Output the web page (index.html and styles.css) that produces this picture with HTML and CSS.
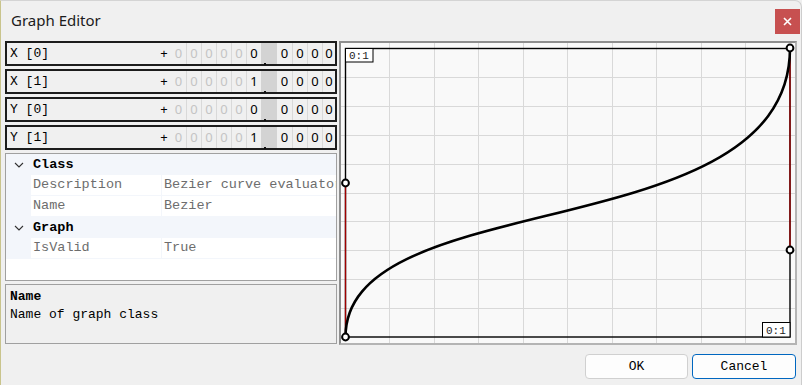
FILE: index.html
```html
<!DOCTYPE html>
<html>
<head>
<meta charset="utf-8">
<link rel="stylesheet" href="styles.css">
</head>
<body>
<div class="window">
  <header class="titlebar">
    <span class="title">Graph Editor</span>
    <button class="close" aria-label="Close">
      <svg width="9" height="9" viewBox="0 0 9 9"><path d="M1 1 L8 8 M8 1 L1 8" stroke="#fff" stroke-width="1.6" fill="none"/></svg>
    </button>
  </header>
  <main class="content">
    <section class="left">
      <div class="vec-row"><span class="vec-label">X [0]</span><div class="digits"><span class="sign">+</span><span class="d dim first">0</span><span class="d dim">0</span><span class="d dim">0</span><span class="d dim">0</span><span class="d dim">0</span><span class="d">0</span><span class="point"></span><span class="d nb">0</span><span class="d">0</span><span class="d">0</span><span class="d last">0</span></div></div>
      <div class="vec-row"><span class="vec-label">X [1]</span><div class="digits"><span class="sign">+</span><span class="d dim first">0</span><span class="d dim">0</span><span class="d dim">0</span><span class="d dim">0</span><span class="d dim">0</span><span class="d">1</span><span class="point"></span><span class="d nb">0</span><span class="d">0</span><span class="d">0</span><span class="d last">0</span></div></div>
      <div class="vec-row"><span class="vec-label">Y [0]</span><div class="digits"><span class="sign">+</span><span class="d dim first">0</span><span class="d dim">0</span><span class="d dim">0</span><span class="d dim">0</span><span class="d dim">0</span><span class="d">0</span><span class="point"></span><span class="d nb">0</span><span class="d">0</span><span class="d">0</span><span class="d last">0</span></div></div>
      <div class="vec-row"><span class="vec-label">Y [1]</span><div class="digits"><span class="sign">+</span><span class="d dim first">0</span><span class="d dim">0</span><span class="d dim">0</span><span class="d dim">0</span><span class="d dim">0</span><span class="d">1</span><span class="point"></span><span class="d nb">0</span><span class="d">0</span><span class="d">0</span><span class="d last">0</span></div></div>

      <div class="props">
        <div class="cat"><span class="chev"><svg width="10" height="6" viewBox="0 0 10 6"><path d="M1 1 L5 5 L9 1" stroke="#333" stroke-width="1.1" fill="none"/></svg></span><span class="cat-name">Class</span></div>
        <div class="prop"><span class="pname">Description</span><span class="pval">Bezier curve evaluator</span></div>
        <div class="prop"><span class="pname">Name</span><span class="pval">Bezier</span></div>
        <div class="cat"><span class="chev"><svg width="10" height="6" viewBox="0 0 10 6"><path d="M1 1 L5 5 L9 1" stroke="#333" stroke-width="1.1" fill="none"/></svg></span><span class="cat-name">Graph</span></div>
        <div class="prop"><span class="pname">IsValid</span><span class="pval">True</span></div>
      </div>

      <div class="desc">
        <div class="desc-title">Name</div>
        <div>Name of graph class</div>
      </div>
    </section>

    <section class="graph">
      <svg class="plot" width="454" height="300" viewBox="341 43 454 300">
        <rect x="341" y="43" width="454" height="300" fill="#f9f9f9"/>
        <g stroke="#d9d9d9" stroke-width="1">
          <line x1="389.5" y1="43" x2="389.5" y2="343"/>
          <line x1="434.5" y1="43" x2="434.5" y2="343"/>
          <line x1="478.5" y1="43" x2="478.5" y2="343"/>
          <line x1="523.5" y1="43" x2="523.5" y2="343"/>
          <line x1="567.5" y1="43" x2="567.5" y2="343"/>
          <line x1="612.5" y1="43" x2="612.5" y2="343"/>
          <line x1="656.5" y1="43" x2="656.5" y2="343"/>
          <line x1="701.5" y1="43" x2="701.5" y2="343"/>
          <line x1="745.5" y1="43" x2="745.5" y2="343"/>
          <line x1="341" y1="77.5" x2="795" y2="77.5"/>
          <line x1="341" y1="106.5" x2="795" y2="106.5"/>
          <line x1="341" y1="135.5" x2="795" y2="135.5"/>
          <line x1="341" y1="164.5" x2="795" y2="164.5"/>
          <line x1="341" y1="193.5" x2="795" y2="193.5"/>
          <line x1="341" y1="221.5" x2="795" y2="221.5"/>
          <line x1="341" y1="250.5" x2="795" y2="250.5"/>
          <line x1="341" y1="279.5" x2="795" y2="279.5"/>
          <line x1="341" y1="308.5" x2="795" y2="308.5"/>
        </g>
        <rect x="345.5" y="48.5" width="444.5" height="288.5" fill="none" stroke="#000" stroke-width="1.4"/>
        <line x1="345.5" y1="337" x2="345.5" y2="183" stroke="#a00000" stroke-width="1.3"/>
        <line x1="790" y1="48" x2="790" y2="250" stroke="#a00000" stroke-width="1.3"/>
        <path d="M345.5 337 C345.5 183 790 250 790 48" fill="none" stroke="#000" stroke-width="2.6"/>
        <g fill="#fff" stroke="#000" stroke-width="2">
          <circle cx="345.5" cy="337" r="3.4"/>
          <circle cx="345.5" cy="183" r="3.4"/>
          <circle cx="790" cy="250" r="3.4"/>
          <circle cx="790" cy="48" r="3.4"/>
        </g>
        <rect x="345.5" y="48.5" width="27.5" height="13.5" fill="#fff" stroke="#000" stroke-width="1"/>
        <text x="349" y="59" class="tag">0:1</text>
        <rect x="762.5" y="322.5" width="27.5" height="14.5" fill="#fff" stroke="#000" stroke-width="1"/>
        <text x="766" y="334" class="tag">0:1</text>
      </svg>
    </section>
  </main>
  <footer class="buttons">
    <button class="btn ok">OK</button>
    <button class="btn cancel">Cancel</button>
  </footer>
</div>
</body>
</html>
```

FILE: styles.css
```css
* { box-sizing: border-box; }

body {
  margin: 0;
  background: #f0f0f0;
  font-family: "Liberation Mono", "DejaVu Sans Mono", monospace;
  font-size: 13px;
  color: #000;
}

.window {
  width: 802px;
  height: 385px;
  background: #f0f0f0;
  border-top: 1px solid #d4d4d4;
  border-left: 1px solid #c9c48c;
  border-right: 1px solid #cdcdcd;
  border-top-right-radius: 7px;
  display: flex;
  flex-direction: column;
  overflow: hidden;
}

.titlebar {
  height: 40px;
  display: flex;
  align-items: flex-start;
  justify-content: space-between;
}

.title {
  font-family: "Noto Sans", "Liberation Sans", sans-serif;
  font-size: 15px;
  line-height: 20px;
  margin: 9px 0 0 10px;
  color: #1b1b1b;
}

.close {
  width: 25px;
  height: 25px;
  margin: 8px 1px 0 0;
  padding: 0;
  border: 0;
  background: #c75050;
  display: flex;
  align-items: center;
  justify-content: center;
}

.content {
  display: flex;
  gap: 2px;
  padding-left: 4px;
  height: 304px;
}

.left {
  width: 332px;
  display: flex;
  flex-direction: column;
  gap: 3px;
}

.vec-row {
  height: 25px;
  border: 2px solid #1c1c1c;
  background: #f0f0f0;
  display: flex;
  justify-content: space-between;
}

.vec-label {
  padding-left: 3px;
  line-height: 21px;
}

.digits {
  display: flex;
  font-family: "Noto Sans", "Liberation Sans", sans-serif;
  font-size: 13px;
}

.sign {
  width: 14px;
  text-align: center;
  line-height: 21px;
}

.d {
  width: 15px;
  text-align: center;
  line-height: 21px;
  border-left: 1px solid #d9d9d9;
}

.d.first, .d.nb { border-left: 0; }
.d.last { width: 13px; }
.d.dim { color: #c4c4c4; }

.point {
  width: 16px;
  background: #d3d3d3;
  position: relative;
}

.point::after {
  content: "";
  position: absolute;
  left: 3px;
  bottom: -1px;
  width: 2px;
  height: 2px;
  background: #111;
}

.props {
  height: 128px;
  border: 1px solid #a0a0a0;
  background: #fff;
  overflow: hidden;
  font-size: 13.5px;
}

.cat {
  height: 21px;
  display: flex;
  align-items: center;
  background: #f3f6fb;
}

.chev {
  width: 25px;
  display: flex;
  justify-content: center;
  padding-left: 1px;
}

.cat-name {
  padding-left: 2px;
  font-weight: bold;
  line-height: 21px;
}

.prop {
  height: 21px;
  display: flex;
  background: #f3f6fb;
  padding-bottom: 1px;
  color: #6d6d6d;
}

.pname {
  margin-left: 25px;
  width: 130px;
  background: #fff;
  padding-left: 2px;
  line-height: 20px;
}

.pval {
  margin-left: 1px;
  flex: 1;
  background: #fff;
  padding-left: 2px;
  line-height: 20px;
  white-space: nowrap;
  overflow: hidden;
}

.desc {
  height: 60px;
  border: 1px solid #a0a0a0;
  background: #f0f0f0;
  padding: 3px 4px;
  line-height: 18px;
}

.desc-title { font-weight: bold; }

.graph {
  width: 458px;
  height: 304px;
  border: 2px solid;
  border-color: #8e8e8e #b4b4b4 #b4b4b4 #8e8e8e;
}

.plot { display: block; }

.tag {
  font-family: "Liberation Mono", monospace;
  font-size: 11px;
  fill: #222;
}

.buttons {
  display: flex;
  justify-content: flex-end;
  gap: 4px;
  padding: 9px 5px 0 0;
}

.btn {
  height: 25px;
  background: #fdfdfd;
  border: 1px solid #d0d0d0;
  border-radius: 4px;
  font-family: "Liberation Mono", monospace;
  font-size: 13px;
  color: #000;
  padding: 0;
}

.ok { width: 103px; }
.cancel { width: 104px; border-color: #0067c0; }
```
